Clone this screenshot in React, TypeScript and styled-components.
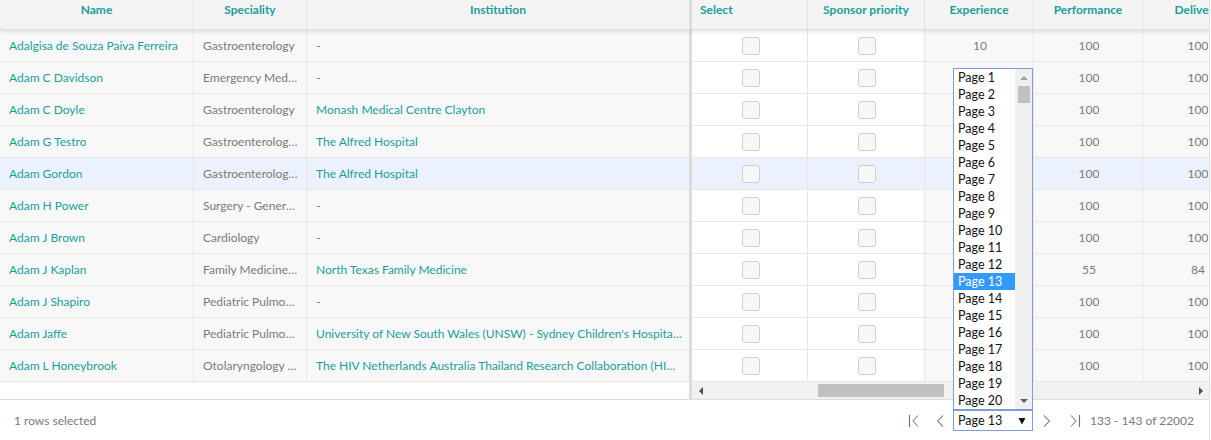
import React from 'react';
import styled, { createGlobalStyle } from 'styled-components';

const GlobalStyle = createGlobalStyle`
  html, body {
    margin: 0;
    padding: 0;
    background: #fff;
  }
  body {
    font-family: Lato, "Open Sans", "Noto Sans", sans-serif;
    font-size: 12px;
  }
`;

const TEAL = '#1a9e9a';
const GRAY_TEXT = '#7a7a7a';

type Kind = 'link' | 'text' | 'check' | 'num';

interface Column {
  key: string;
  title: string;
  width: number;
  kind: Kind;
  headerAlign: 'left' | 'center';
  plain?: boolean;
  pinEdge?: boolean;
}

const columns: Column[] = [
  { key: 'name', title: 'Name', width: 194, kind: 'link', headerAlign: 'center' },
  { key: 'speciality', title: 'Speciality', width: 113, kind: 'text', headerAlign: 'center' },
  { key: 'institution', title: 'Institution', width: 385, kind: 'link', headerAlign: 'center', pinEdge: true },
  { key: 'select', title: 'Select', width: 116, kind: 'check', headerAlign: 'left', plain: true },
  { key: 'sponsor', title: 'Sponsor priority', width: 117, kind: 'check', headerAlign: 'center', plain: true },
  { key: 'experience', title: 'Experience', width: 109, kind: 'num', headerAlign: 'center' },
  { key: 'performance', title: 'Performance', width: 109, kind: 'num', headerAlign: 'center' },
  { key: 'delivery', title: 'Delivery', width: 109, kind: 'num', headerAlign: 'center' },
];

interface Doctor {
  name: string;
  speciality: string;
  institution: string;
  experience: string;
  performance: string;
  delivery: string;
  selected?: boolean;
}

const doctors: Doctor[] = [
  { name: 'Adalgisa de Souza Paiva Ferreira', speciality: 'Gastroenterology', institution: '-', experience: '10', performance: '100', delivery: '100' },
  { name: 'Adam C Davidson', speciality: 'Emergency Medicine', institution: '-', experience: '10', performance: '100', delivery: '100' },
  { name: 'Adam C Doyle', speciality: 'Gastroenterology', institution: 'Monash Medical Centre Clayton', experience: '10', performance: '100', delivery: '100' },
  { name: 'Adam G Testro', speciality: 'Gastroenterology, Hepatology', institution: 'The Alfred Hospital', experience: '10', performance: '100', delivery: '100' },
  { name: 'Adam Gordon', speciality: 'Gastroenterology, Hepatology', institution: 'The Alfred Hospital', experience: '10', performance: '100', delivery: '100', selected: true },
  { name: 'Adam H Power', speciality: 'Surgery - General, Colorectal', institution: '-', experience: '10', performance: '100', delivery: '100' },
  { name: 'Adam J Brown', speciality: 'Cardiology', institution: '-', experience: '10', performance: '100', delivery: '100' },
  { name: 'Adam J Kaplan', speciality: 'Family Medicine, Sports', institution: 'North Texas Family Medicine', experience: '10', performance: '55', delivery: '84' },
  { name: 'Adam J Shapiro', speciality: 'Pediatric Pulmonology', institution: '-', experience: '10', performance: '100', delivery: '100' },
  { name: 'Adam Jaffe', speciality: 'Pediatric Pulmonology', institution: "University of New South Wales (UNSW) - Sydney Children's Hospital, Randwick", experience: '10', performance: '100', delivery: '100' },
  { name: 'Adam L Honeybrook', speciality: 'Otolaryngology - Head and Neck', institution: 'The HIV Netherlands Australia Thailand Research Collaboration (HIV-NAT)', experience: '10', performance: '100', delivery: '100' },
];

const pages = Array.from({ length: 20 }, (_, i) => i + 1);
const currentPage = 13;

const GridWrapper = styled.div`
  width: 1210px;
  height: 440px;
  display: flex;
  flex-direction: column;
  border-right: 1px solid #e2e2e2;
  box-sizing: border-box;
  overflow: hidden;
`;

const GridBody = styled.div`
  display: flex;
  flex-direction: column;
  overflow: hidden;
`;

const HeaderRow = styled.div`
  position: relative;
  z-index: 1;
  display: flex;
  height: 30px;
  background: #f4f4f4;
  border-bottom: 1px solid #dedede;
  box-shadow: 0 2px 4px rgba(0, 0, 0, 0.1);
  box-sizing: border-box;
`;

const HeaderCell = styled.div<{ $width: number; $align: string; $pinEdge?: boolean }>`
  flex: 0 0 ${p => p.$width}px;
  box-sizing: border-box;
  padding: 3px 8px 0;
  text-align: ${p => p.$align};
  font-weight: 700;
  color: ${TEAL};
  line-height: 14px;
  white-space: nowrap;
  border-right: ${p => (p.$pinEdge ? '3px solid #dcdcdc' : '1px solid #e4e4e4')};
`;

const Row = styled.div`
  display: flex;
  height: 32px;
`;

const Cell = styled.div<{ $width: number; $plain?: boolean; $selected?: boolean; $pinEdge?: boolean; $kind: Kind }>`
  flex: 0 0 ${p => p.$width}px;
  box-sizing: border-box;
  display: flex;
  align-items: center;
  justify-content: ${p => (p.$kind === 'link' || p.$kind === 'text' ? 'flex-start' : 'center')};
  padding: 0 7px 0 9px;
  background: ${p => (p.$selected ? '#ebf2fd' : p.$plain ? '#fff' : '#f8f8f8')};
  border-bottom: 1px solid #e7e7e7;
  border-right: ${p => (p.$pinEdge ? '3px solid #dcdcdc' : '1px solid #e7e7e7')};
  color: ${p => (p.$kind === 'link' ? TEAL : GRAY_TEXT)};
  min-width: 0;
`;

const CellText = styled.span`
  overflow: hidden;
  text-overflow: ellipsis;
  white-space: nowrap;
`;

const CheckBox = styled.span`
  width: 18px;
  height: 18px;
  box-sizing: border-box;
  border: 1px solid #cfcfcf;
  border-radius: 3px;
  background: #f7f7f7;
`;

const ScrollRow = styled.div`
  display: flex;
  height: 17px;
  border-bottom: 1px solid #dedede;
`;

const ScrollSpacer = styled.div`
  flex: 0 0 692px;
  box-sizing: border-box;
  border-right: 3px solid #dcdcdc;
`;

const ScrollTrack = styled.div`
  flex: 1;
  display: flex;
  align-items: center;
  background: #f1f1f1;
`;

const ScrollArrow = styled.span`
  flex: 0 0 17px;
  display: flex;
  align-items: center;
  justify-content: center;
`;

const ScrollLane = styled.div`
  flex: 1;
  height: 100%;
  display: flex;
  align-items: center;
  padding-left: 109px;
`;

const ScrollThumb = styled.div`
  width: 126px;
  height: 13px;
  background: #c1c1c1;
`;

const Footer = styled.div`
  flex: 1;
  display: flex;
  align-items: center;
  justify-content: space-between;
  padding: 1px 15px 0 14px;
  color: ${GRAY_TEXT};
`;

const Pager = styled.div`
  display: flex;
  align-items: center;
`;

const PagerButton = styled.span<{ $gap: number }>`
  width: 22px;
  height: 20px;
  display: flex;
  align-items: center;
  justify-content: center;
  margin-right: ${p => p.$gap}px;
`;

const PageSelectWrap = styled.div`
  position: relative;
  margin-right: 3px;
`;

const PageSelect = styled.div`
  width: 80px;
  height: 21px;
  box-sizing: border-box;
  border: 1px solid #7c9fd6;
  background: #fff;
  display: flex;
  align-items: center;
  justify-content: space-between;
  padding: 0 6px 0 4px;
  color: #111;
  font-size: 12.5px;
`;

const PageList = styled.div`
  position: absolute;
  left: 0;
  bottom: 100%;
  width: 80px;
  height: 342px;
  box-sizing: border-box;
  border: 1px solid #7c9fd6;
  background: #fff;
  display: flex;
`;

const PageOptions = styled.div`
  flex: 1;
  display: flex;
  flex-direction: column;
`;

const PageOption = styled.div<{ $active?: boolean }>`
  height: 17px;
  line-height: 17px;
  padding-left: 4px;
  font-size: 12.5px;
  color: ${p => (p.$active ? '#fff' : '#111')};
  background: ${p => (p.$active ? '#3399ff' : 'transparent')};
`;

const ListScroll = styled.div`
  flex: 0 0 17px;
  background: #f0f0f0;
  display: flex;
  flex-direction: column;
  align-items: center;
`;

const ListArrow = styled.span`
  height: 17px;
  display: flex;
  align-items: center;
  justify-content: center;
`;

const ListThumb = styled.div`
  width: 12px;
  height: 17px;
  background: #c1c1c1;
`;

const ListFill = styled.div`
  flex: 1;
`;

const RangeText = styled.span`
  margin-left: 4px;
`;

const Triangle = ({ dir, color, size = 4 }: { dir: 'up' | 'down' | 'left' | 'right'; color: string; size?: number }) => {
  const s = size * 2;
  const pts = {
    up: `0,${size + 1} ${size},1 ${s},${size + 1}`,
    down: `0,1 ${size},${size + 1} ${s},1`,
    left: `${size + 1},0 1,${size} ${size + 1},${s}`,
    right: `1,0 ${size + 1},${size} 1,${s}`,
  }[dir];
  const w = dir === 'up' || dir === 'down' ? s : size + 2;
  const h = dir === 'up' || dir === 'down' ? size + 2 : s;
  return (
    <svg width={w} height={h} viewBox={`0 0 ${w} ${h}`}>
      <polygon points={pts} fill={color} />
    </svg>
  );
};

const SelectArrow = () => (
  <svg width="8" height="8" viewBox="0 0 8 8">
    <polygon points="0.5,1 7.5,1 4,7.5" fill="#111" />
  </svg>
);

const PagerIcon = ({ type }: { type: 'first' | 'prev' | 'next' | 'last' }) => (
  <svg width="14" height="14" viewBox="0 0 14 14" fill="none" strokeWidth="1.1">
    {type === 'first' && (
      <>
        <line x1="2.5" y1="1" x2="2.5" y2="13" stroke="#8a5c98" />
        <polyline points="11,1.5 6,7 11,12.5" stroke="#8a8a8a" />
      </>
    )}
    {type === 'prev' && <polyline points="10,1.5 4.5,7 10,12.5" stroke="#8a8a8a" />}
    {type === 'next' && <polyline points="4,1.5 9.5,7 4,12.5" stroke="#8a8a8a" />}
    {type === 'last' && (
      <>
        <polyline points="3,1.5 8,7 3,12.5" stroke="#8a8a8a" />
        <line x1="11.5" y1="1" x2="11.5" y2="13" stroke="#8a5c98" />
      </>
    )}
  </svg>
);

const renderCell = (col: Column, doc: Doctor) => {
  if (col.kind === 'check') return <CheckBox />;
  const value = (doc as any)[col.key] as string;
  return <CellText>{value}</CellText>;
};

const App = () => {
  return (
    <>
      <GlobalStyle />
      <GridWrapper>
        <GridBody>
          <HeaderRow>
            {columns.map(col => (
              <HeaderCell key={col.key} $width={col.width} $align={col.headerAlign} $pinEdge={col.pinEdge}>
                {col.title}
              </HeaderCell>
            ))}
          </HeaderRow>
          {doctors.map(doc => (
            <Row key={doc.name}>
              {columns.map(col => (
                <Cell
                  key={col.key}
                  $width={col.width}
                  $kind={col.kind}
                  $plain={col.plain}
                  $pinEdge={col.pinEdge}
                  $selected={doc.selected}
                >
                  {renderCell(col, doc)}
                </Cell>
              ))}
            </Row>
          ))}
          <ScrollRow>
            <ScrollSpacer />
            <ScrollTrack>
              <ScrollArrow>
                <Triangle dir="left" color="#505050" size={4} />
              </ScrollArrow>
              <ScrollLane>
                <ScrollThumb />
              </ScrollLane>
              <ScrollArrow>
                <Triangle dir="right" color="#505050" size={4} />
              </ScrollArrow>
            </ScrollTrack>
          </ScrollRow>
        </GridBody>
        <Footer>
          <span>1 rows selected</span>
          <Pager>
            <PagerButton $gap={4}>
              <PagerIcon type="first" />
            </PagerButton>
            <PagerButton $gap={2}>
              <PagerIcon type="prev" />
            </PagerButton>
            <PageSelectWrap>
              <PageList>
                <PageOptions>
                  {pages.map(p => (
                    <PageOption key={p} $active={p === currentPage}>
                      Page {p}
                    </PageOption>
                  ))}
                </PageOptions>
                <ListScroll>
                  <ListArrow>
                    <Triangle dir="up" color="#a3a3a3" size={4} />
                  </ListArrow>
                  <ListThumb />
                  <ListFill />
                  <ListArrow>
                    <Triangle dir="down" color="#606060" size={4} />
                  </ListArrow>
                </ListScroll>
              </PageList>
              <PageSelect>
                <span>Page {currentPage}</span>
                <SelectArrow />
              </PageSelect>
            </PageSelectWrap>
            <PagerButton $gap={6}>
              <PagerIcon type="next" />
            </PagerButton>
            <PagerButton $gap={0}>
              <PagerIcon type="last" />
            </PagerButton>
            <RangeText>133 - 143 of 22002</RangeText>
          </Pager>
        </Footer>
      </GridWrapper>
    </>
  );
};

export default App;
